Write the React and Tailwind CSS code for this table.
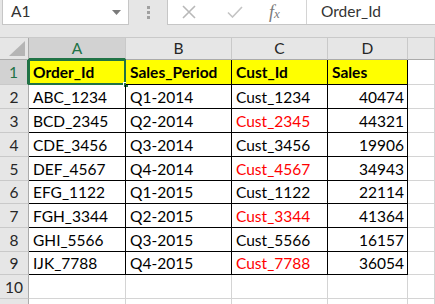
import React from "react";

const rows = [
  ["Order_Id", "Sales_Period", "Cust_Id", "Sales"],
  ["ABC_1234", "Q1-2014", "Cust_1234", "40474"],
  ["BCD_2345", "Q2-2014", "Cust_2345", "44321"],
  ["CDE_3456", "Q3-2014", "Cust_3456", "19906"],
  ["DEF_4567", "Q4-2014", "Cust_4567", "34943"],
  ["EFG_1122", "Q1-2015", "Cust_1122", "22114"],
  ["FGH_3344", "Q2-2015", "Cust_3344", "41364"],
  ["GHI_5566", "Q3-2015", "Cust_5566", "16157"],
  ["IJK_7788", "Q4-2015", "Cust_7788", "36054"],
];
const heights = ["h-[25px]", "h-[24px]", "h-[24px]", "h-[24px]", "h-[24px]", "h-[23px]", "h-[24px]", "h-[24px]", "h-[23px]", "h-[24px]", "h-[24px]"];
const widths = ["w-[29px]", "w-[97px]", "w-[106px]", "w-[96px]", "w-[80px]", "w-[27px]"];

export default function App() {
  return (
    <div className="w-[435px] h-[304px] overflow-hidden bg-white text-black" style={{ fontFamily: "Lato, 'Liberation Sans', sans-serif" }}>
      {/* toolbar */}
      <div className="h-[37px] bg-[#e6e6e6] flex items-start relative">
        <div className="ml-[2px] w-[127px] h-[26px] -mt-px bg-white border border-[#c6c6c6] flex items-center justify-between pl-[8px] pr-[7px]">
          <span className="text-[15.5px] text-[#333]">A1</span>
          <svg width="9" height="5" viewBox="0 0 9 5"><path d="M0 0h9L4.5 5z" fill="#7a7a7a" /></svg>
        </div>
        <div className="w-[38px] h-[25px] flex flex-col items-center justify-center gap-[2px]">
          <div className="w-[3px] h-[3px] bg-[#a0a0a0]" />
          <div className="w-[3px] h-[3px] bg-[#a0a0a0]" />
          <div className="w-[3px] h-[3px] bg-[#a0a0a0]" />
        </div>
        <div className="flex-1 h-[26px] -mt-px bg-white border border-r-0 border-[#c6c6c6] flex items-center">
          <div className="w-[139px] h-full flex items-center border-r border-[#d4d4d4]">
            <svg className="ml-[14px]" width="14" height="14" viewBox="0 0 14 14"><path d="M1 1L13 13M13 1L1 13" stroke="#b8b8b8" strokeWidth="1.6" /></svg>
            <svg className="ml-[31px]" width="16" height="12" viewBox="0 0 16 12"><path d="M1 6.5L5.5 11L15 1" stroke="#c4c4c4" strokeWidth="1.6" fill="none" /></svg>
            <span className="ml-[26px] text-[18px] italic text-[#7a7a7a] leading-none" style={{ fontFamily: "'Liberation Serif', serif" }}>f<span className="text-[13px]">x</span></span>
          </div>
          <span className="ml-[14px] text-[15.5px] text-[#333]">Order_Id</span>
        </div>
      </div>
      {/* header row */}
      <div className="flex border-t border-[#c9c9c9] h-[23px]">
        <div className={`${widths[0]} shrink-0 bg-[#e6e6e6] border-r border-b border-[#ababab] relative`}>
          <svg className="absolute right-[3px] bottom-[3px]" width="16" height="15" viewBox="0 0 16 15"><path d="M16 0V15H0z" fill="#b5b5b5" /></svg>
        </div>
        {["A", "B", "C", "D", ""].map((l, i) => (
          <div
            key={i}
            className={`${widths[i + 1]} shrink-0 flex items-center justify-center pt-[1px] text-[15.5px] border-r border-[#c9c9c9] ${i === 0 ? "bg-[#d2d2d2] text-[#217346] border-b-2 border-b-[#217346]" : "bg-[#e6e6e6] text-[#262626] border-b border-b-[#ababab]"}`}
          >
            {l}
          </div>
        ))}
      </div>
      {/* rows */}
      {heights.map((h, r) => {
        const data = rows[r];
        return (
          <div key={r} className={`flex ${h}`}>
            <div className={`${widths[0]} shrink-0 flex items-center justify-center pt-[2px] text-[15.5px] border-b border-[#c9c9c9] ${r === 0 ? "bg-[#d2d2d2] text-[#217346] border-r-2 border-r-[#217346]" : "bg-[#e6e6e6] text-[#262626] border-r border-r-[#ababab]"}`}>
              {r < 10 ? r + 1 : ""}
            </div>
            {[0, 1, 2, 3, 4].map((c) => {
              const inData = data && c < 4;
              const txt = inData ? data[c] : "";
              const red = c === 2 && r > 0 && r % 2 === 0;
              const cls = [
                widths[c + 1],
                "shrink-0 flex items-center pt-[2px] text-[15.5px] whitespace-nowrap overflow-visible relative",
                inData ? "border-r border-b border-black" : "border-r border-b border-[#d4d4d4]",
                inData && r === 0 ? "bg-[#ffff00] font-bold" : "",
                c === 3 && r > 0 ? "justify-end pr-[3px]" : "pl-[4px]",
                red ? "text-[#ff0000]" : "",
              ].join(" ");
              return (
                <div key={c} className={cls}>
                  {txt}
                  {r === 0 && c === 0 && (
                    <>
                      <div className="absolute -left-px -top-px -right-px -bottom-px border-2 border-[#217346]" />
                      <div className="absolute -right-[4px] -bottom-[4px] w-[6px] h-[6px] bg-[#217346] border border-white" />
                    </>
                  )}
                </div>
              );
            })}
          </div>
        );
      })}
    </div>
  );
}
